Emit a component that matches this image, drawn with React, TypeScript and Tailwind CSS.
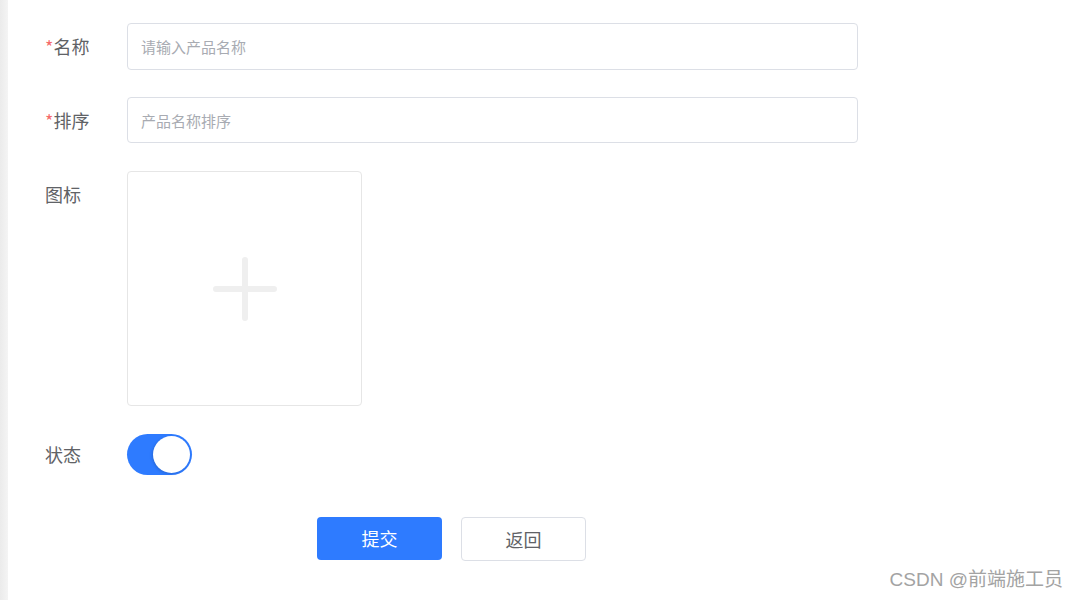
import React from "react";

const font = { fontFamily: '"Noto Sans CJK SC", "Noto Sans", sans-serif' };

function Label({ text, required }: { text: string; required?: boolean }) {
  return (
    <div className="w-[81px] shrink-0 h-[46px] leading-[46px] text-[18px] text-[#606266] -ml-[1px] pl-0">
      {required && <span className="text-[#f56c6c]">*</span>}
      {text}
    </div>
  );
}

export default function App() {
  return (
    <div className="flex w-[1078px] h-[600px] bg-white overflow-hidden relative" style={font}>
      <div className="w-[8px] shrink-0 h-full bg-gradient-to-r from-[#ebebeb] to-[#f4f4f4]" />
      <div className="flex flex-col pl-[38px] pt-[23px]">
        <div className="flex items-start">
          <Label text="名称" required />
          <input
            className="w-[731px] h-[47px] border border-[#dcdfe6] rounded-[4px] px-[13px] text-[15px] text-[#606266] placeholder:text-[#a8abb2] outline-none ml-[1px]"
            placeholder="请输入产品名称"
          />
        </div>
        <div className="flex items-start mt-[27px]">
          <Label text="排序" required />
          <input
            className="w-[731px] h-[46px] border border-[#dcdfe6] rounded-[4px] px-[13px] text-[15px] text-[#606266] placeholder:text-[#a8abb2] outline-none ml-[1px]"
            placeholder="产品名称排序"
          />
        </div>
        <div className="flex items-start mt-[28px]">
          <Label text="图标" />
          <div className="w-[235px] h-[235px] border border-[#e6e6e6] rounded-[4px] flex items-center justify-center ml-[1px]">
            <svg width="64" height="64" viewBox="0 0 64 64">
              <path d="M3 32 H61 M32 3 V61" stroke="#efefef" strokeWidth="6" strokeLinecap="round" />
            </svg>
          </div>
        </div>
        <div className="flex items-center mt-[28px]">
          <div className="w-[81px] shrink-0 text-[18px] text-[#606266] leading-[41px] -ml-[1px]">状态</div>
          <div className="w-[65px] h-[41px] rounded-full bg-[#2e7bff] flex items-center justify-end pr-[2px] ml-[1px]">
            <div className="w-[37px] h-[37px] rounded-full bg-white shadow-[-1px_1px_3px_rgba(0,0,0,0.15)]" />
          </div>
        </div>
        <div className="flex mt-[42px] pl-[271px] gap-[19px]">
          <button className="w-[125px] h-[43px] rounded-[4px] bg-[#2e7bff] text-white text-[18px]">提交</button>
          <button className="w-[125px] h-[44px] rounded-[4px] bg-white border border-[#dcdfe6] text-[#606266] text-[18px]">返回</button>
        </div>
      </div>
      <div className="absolute right-[15px] bottom-[6px] text-[19px] text-[#a3a3a3]" style={{ fontFamily: '"Liberation Sans", "Noto Sans CJK SC", sans-serif' }}>
        CSDN @前端施工员
      </div>
    </div>
  );
}
